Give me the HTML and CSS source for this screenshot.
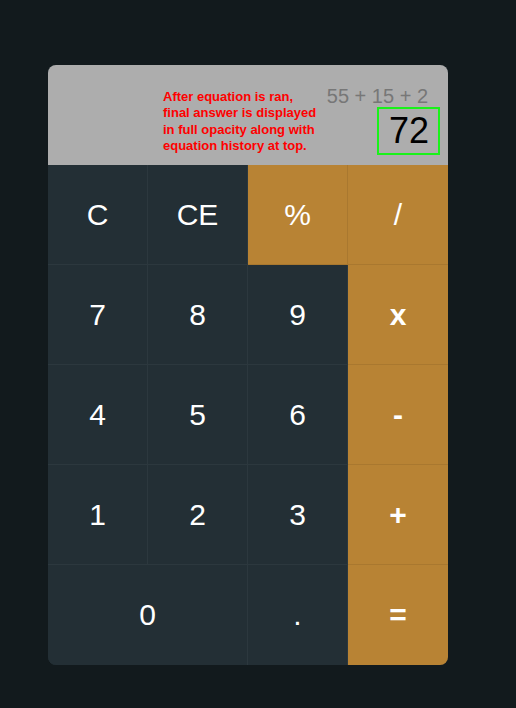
FILE: index.html
```html
<!doctype html>
<html lang="en">
<head>
  <meta charset="utf-8" />
  <meta name="viewport" content="width=device-width,initial-scale=1" />
  <title>Calculator</title>
  <link rel="stylesheet" href="styles.css">
</head>
<body>
  <div class="calc">
    <div class="display">
      <p class="note">After equation is ran, final answer is displayed in full opacity along with equation history at top.</p>
      <div class="history">55 + 15 + 2</div>
      <div class="result">72</div>
    </div>
    <div class="keys">
      <button class="key">C</button>
      <button class="key">CE</button>
      <button class="key op">%</button>
      <button class="key op last">/</button>
      <button class="key">7</button>
      <button class="key">8</button>
      <button class="key">9</button>
      <button class="key op bold last">x</button>
      <button class="key">4</button>
      <button class="key">5</button>
      <button class="key">6</button>
      <button class="key op bold last">-</button>
      <button class="key">1</button>
      <button class="key">2</button>
      <button class="key">3</button>
      <button class="key op bold last">+</button>
      <button class="key wide bottom">0</button>
      <button class="key bottom">.</button>
      <button class="key op bold last bottom">=</button>
    </div>
  </div>
</body>
</html>
```

FILE: styles.css
```css
/* calculator */
body { background:#121a1d; margin:0; font-family:"Liberation Sans", Arial, sans-serif; }
.calc { width:400px; margin:65px 0 0 48px; border-radius:8px; overflow:hidden; background:#232f35; }
.display { position:relative; height:100px; background:#adadad; box-sizing:border-box; padding:20px 8px 0 0; display:flex; flex-direction:column; align-items:flex-end; }
.history { font-size:20px; color:#777; padding-right:12px; line-height:23px; }
.result { font-size:36px; color:#000; line-height:44px; border:2px solid #19f219; padding:0 9px 0 10px; margin-top:-1px; }
.note { position:absolute; left:115px; top:24px; margin:0; width:157px; color:#ff0000; font-weight:bold; font-size:13px; line-height:16.3px; }
.keys { display:grid; grid-template-columns:repeat(4, 100px); grid-auto-rows:100px; }
.key { background:#232f35; color:#fff; border:none; border-right:1px solid #2c383e; border-bottom:1px solid #2c383e; font-family:inherit; font-size:30px; padding:0; cursor:pointer; }
.key.op { background:#b88334; border-color:#a9782f; }
.key.bold { font-weight:bold; }
.key.last { border-right:none; }
.key.bottom { border-bottom:none; }
.key.wide { grid-column:span 2; }
```
